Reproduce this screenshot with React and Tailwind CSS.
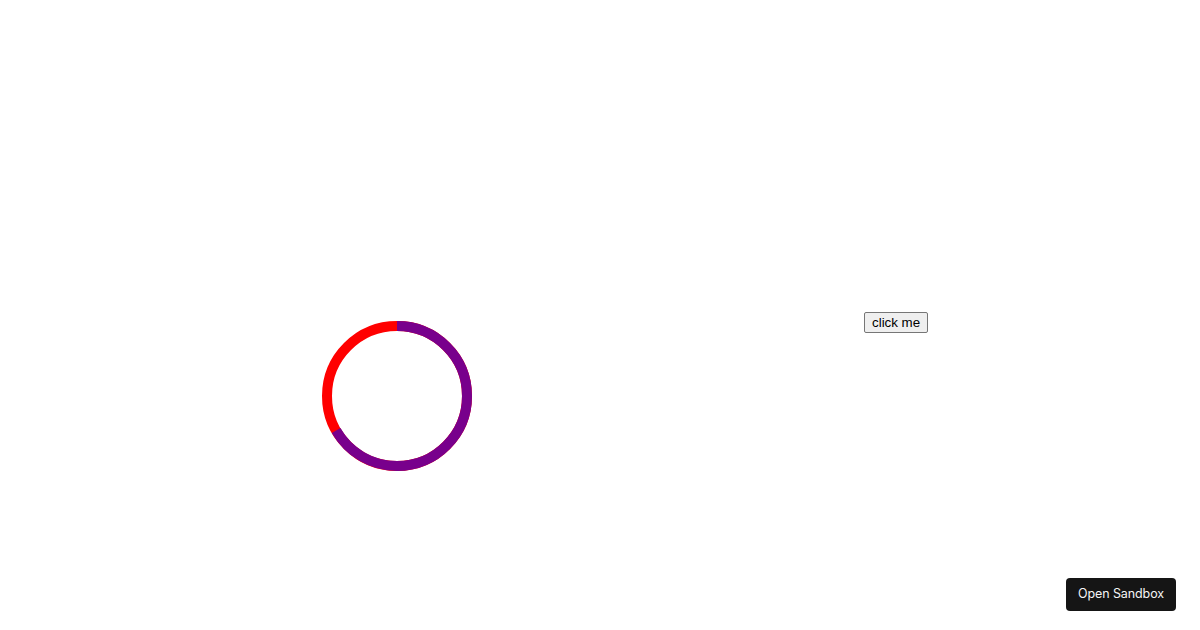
import React from "react";

// Progress ring: purple arc for the completed share, red for the rest.
function Ring({ size = 150, stroke = 10, value = 2 / 3 }) {
  const r = (size - stroke) / 2;
  const c = 2 * Math.PI * r;
  return (
    <svg width={size} height={size} viewBox={`0 0 ${size} ${size}`} className="block">
      <circle cx={size / 2} cy={size / 2} r={r} fill="none" stroke="#ff0000" strokeWidth={stroke} />
      <circle
        cx={size / 2}
        cy={size / 2}
        r={r}
        fill="none"
        stroke="#78008c"
        strokeWidth={stroke}
        strokeDasharray={`${c * value} ${c}`}
        transform={`rotate(-90 ${size / 2} ${size / 2})`}
      />
    </svg>
  );
}

export default function App() {
  return (
    <div className="relative h-[630px] w-[1200px] overflow-hidden bg-white">
      <div className="flex items-start pt-[312px]">
        <div className="ml-[322px] mt-[9px]">
          <Ring />
        </div>
        <button className="ml-[392px] h-[21px] rounded-[2px] border border-[#767676] bg-[#efefef] px-[7px] text-[13.33px] leading-[15px] text-black [font-family:'Liberation_Sans',Arial,sans-serif]">
          click me
        </button>
      </div>
      <button className="absolute bottom-[19px] right-[24px] flex h-[33px] w-[110px] items-center justify-center rounded-[4px] bg-[#151515] text-[12.5px] tracking-[-0.1px] text-[#f5f5f5] [font-family:Inter,'Noto_Sans',sans-serif]">
        Open Sandbox
      </button>
    </div>
  );
}
